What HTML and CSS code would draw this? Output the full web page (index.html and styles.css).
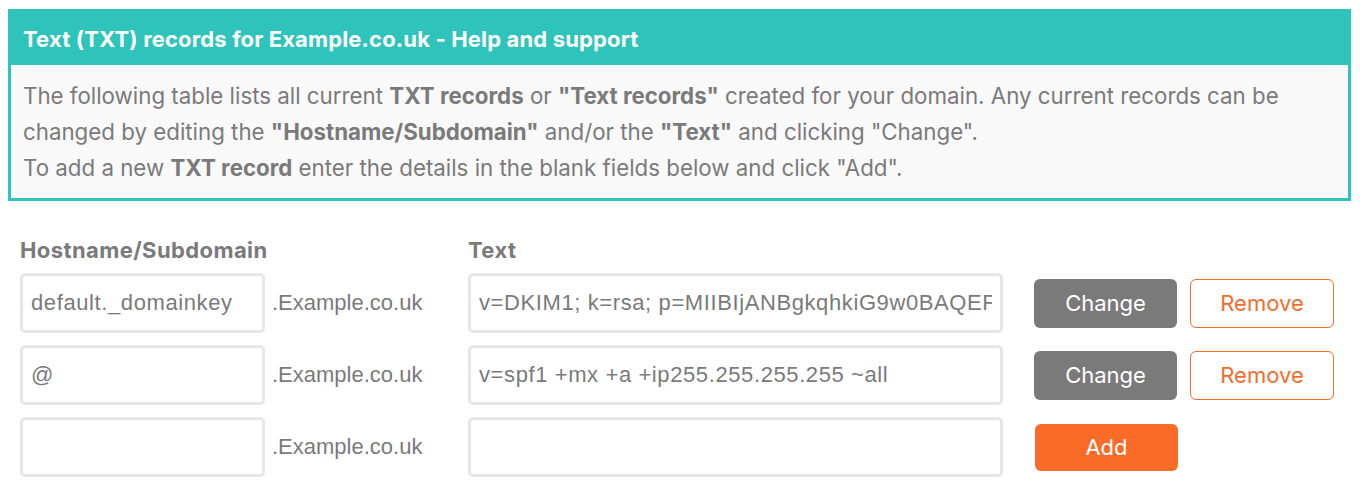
FILE: index.html
```html
<!DOCTYPE html>
<html lang="en">
<head>
    <meta charset="UTF-8">
    <meta name="viewport" content="width=device-width, initial-scale=1.0">
    <title>TXT records</title>
    <link rel="stylesheet" href="styles.css">
</head>
<body>
    <div class="help-box">
        <div class="help-header">Text (TXT) records for Example.co.uk - Help and support</div>
        <div class="help-body">
            The following table lists all current <b>TXT records</b> or <b>"Text records"</b> created for your domain. Any current records can be
            changed by editing the <b>"Hostname/Subdomain"</b> and/or the <b>"Text"</b> and clicking "Change".<br>
            To add a new <b>TXT record</b> enter the details in the blank fields below and click "Add".
        </div>
    </div>

    <form class="records">
        <div class="rec-row labels">
            <label class="col-host">Hostname/Subdomain</label>
            <span class="col-suffix"></span>
            <label class="col-text">Text</label>
        </div>
        <div class="rec-row">
            <input type="text" class="col-host" value="default._domainkey">
            <span class="col-suffix">.Example.co.uk</span>
            <input type="text" class="col-text" value="v=DKIM1; k=rsa; p=MIIBIjANBgkqhkiG9w0BAQEFAAOCAQ8AMIIBCgKCAQEA">
            <div class="actions">
                <button type="button" class="btn btn-change">Change</button>
                <button type="button" class="btn btn-remove">Remove</button>
            </div>
        </div>
        <div class="rec-row">
            <input type="text" class="col-host" value="@">
            <span class="col-suffix">.Example.co.uk</span>
            <input type="text" class="col-text" value="v=spf1 +mx +a +ip255.255.255.255 ~all">
            <div class="actions">
                <button type="button" class="btn btn-change">Change</button>
                <button type="button" class="btn btn-remove">Remove</button>
            </div>
        </div>
        <div class="rec-row">
            <input type="text" class="col-host" value="">
            <span class="col-suffix">.Example.co.uk</span>
            <input type="text" class="col-text" value="">
            <div class="actions">
                <button type="button" class="btn btn-add">Add</button>
            </div>
        </div>
    </form>
</body>
</html>
```

FILE: styles.css
```css
body {
  margin: 9px 9px 0 8px;
  font-family: Inter, sans-serif;
  color: #7a7a7a;
  background: #fff;
}

.help-box {
  border: 3px solid #2ec4bc;
  border-block-start: none;
}

.help-header {
  background-color: #2ec4bc;
  color: #fff;
  font-weight: bold;
  font-size: 22px;
  letter-spacing: 0.15px;
  padding: 17px 12px 0 12px;
  block-size: 39px;
}

.help-body {
  background-color: #f9f9f9;
  font-size: 22.3px;
  line-height: 36px;
  padding: 13px 12px 12px 12px;
}

.help-body b {
  font-weight: bold;
}

.records {
  padding: 36px 0 0 12px;
}

.rec-row {
  display: flex;
  align-items: center;
  margin-block-end: 12px;
}

.rec-row.labels {
  margin-block-end: 10px;
}

.rec-row label {
  font-weight: bold;
  font-size: 22px;
  letter-spacing: 0.4px;
  line-height: 26px;
}

.col-host {
  inline-size: 245px;
}

.col-suffix {
  inline-size: 196px;
  padding-inline-start: 7px;
  font-family: "Liberation Sans", Arial, sans-serif;
  font-size: 22px;
}

.col-text {
  inline-size: 535px;
}

.rec-row input {
  box-sizing: border-box;
  block-size: 60px;
  border: 3px solid #e6e6e6;
  border-radius: 5px;
  padding: 0 8px;
  font-family: "Liberation Sans", Arial, sans-serif;
  font-size: 22px;
  letter-spacing: 0.6px;
  color: #7a7a7a;
  background: #fff;
}

.actions {
  display: flex;
  gap: 13px;
  margin-inline-start: 31px;
}

.btn {
  box-sizing: border-box;
  inline-size: 143px;
  block-size: 49px;
  border-radius: 6px;
  font-family: Inter, sans-serif;
  font-size: 22px;
  cursor: pointer;
}

.btn-change {
  background: #7a7a7a;
  border: none;
  color: #fff;
}

.btn-remove {
  background: #fff;
  border: 1px solid #f26c2a;
  color: #f26c2a;
  inline-size: 144px;
}

.btn-add {
  background: #f96b26;
  border: none;
  color: #fff;
  block-size: 47px;
  margin-inline-start: 1px;
}
```
